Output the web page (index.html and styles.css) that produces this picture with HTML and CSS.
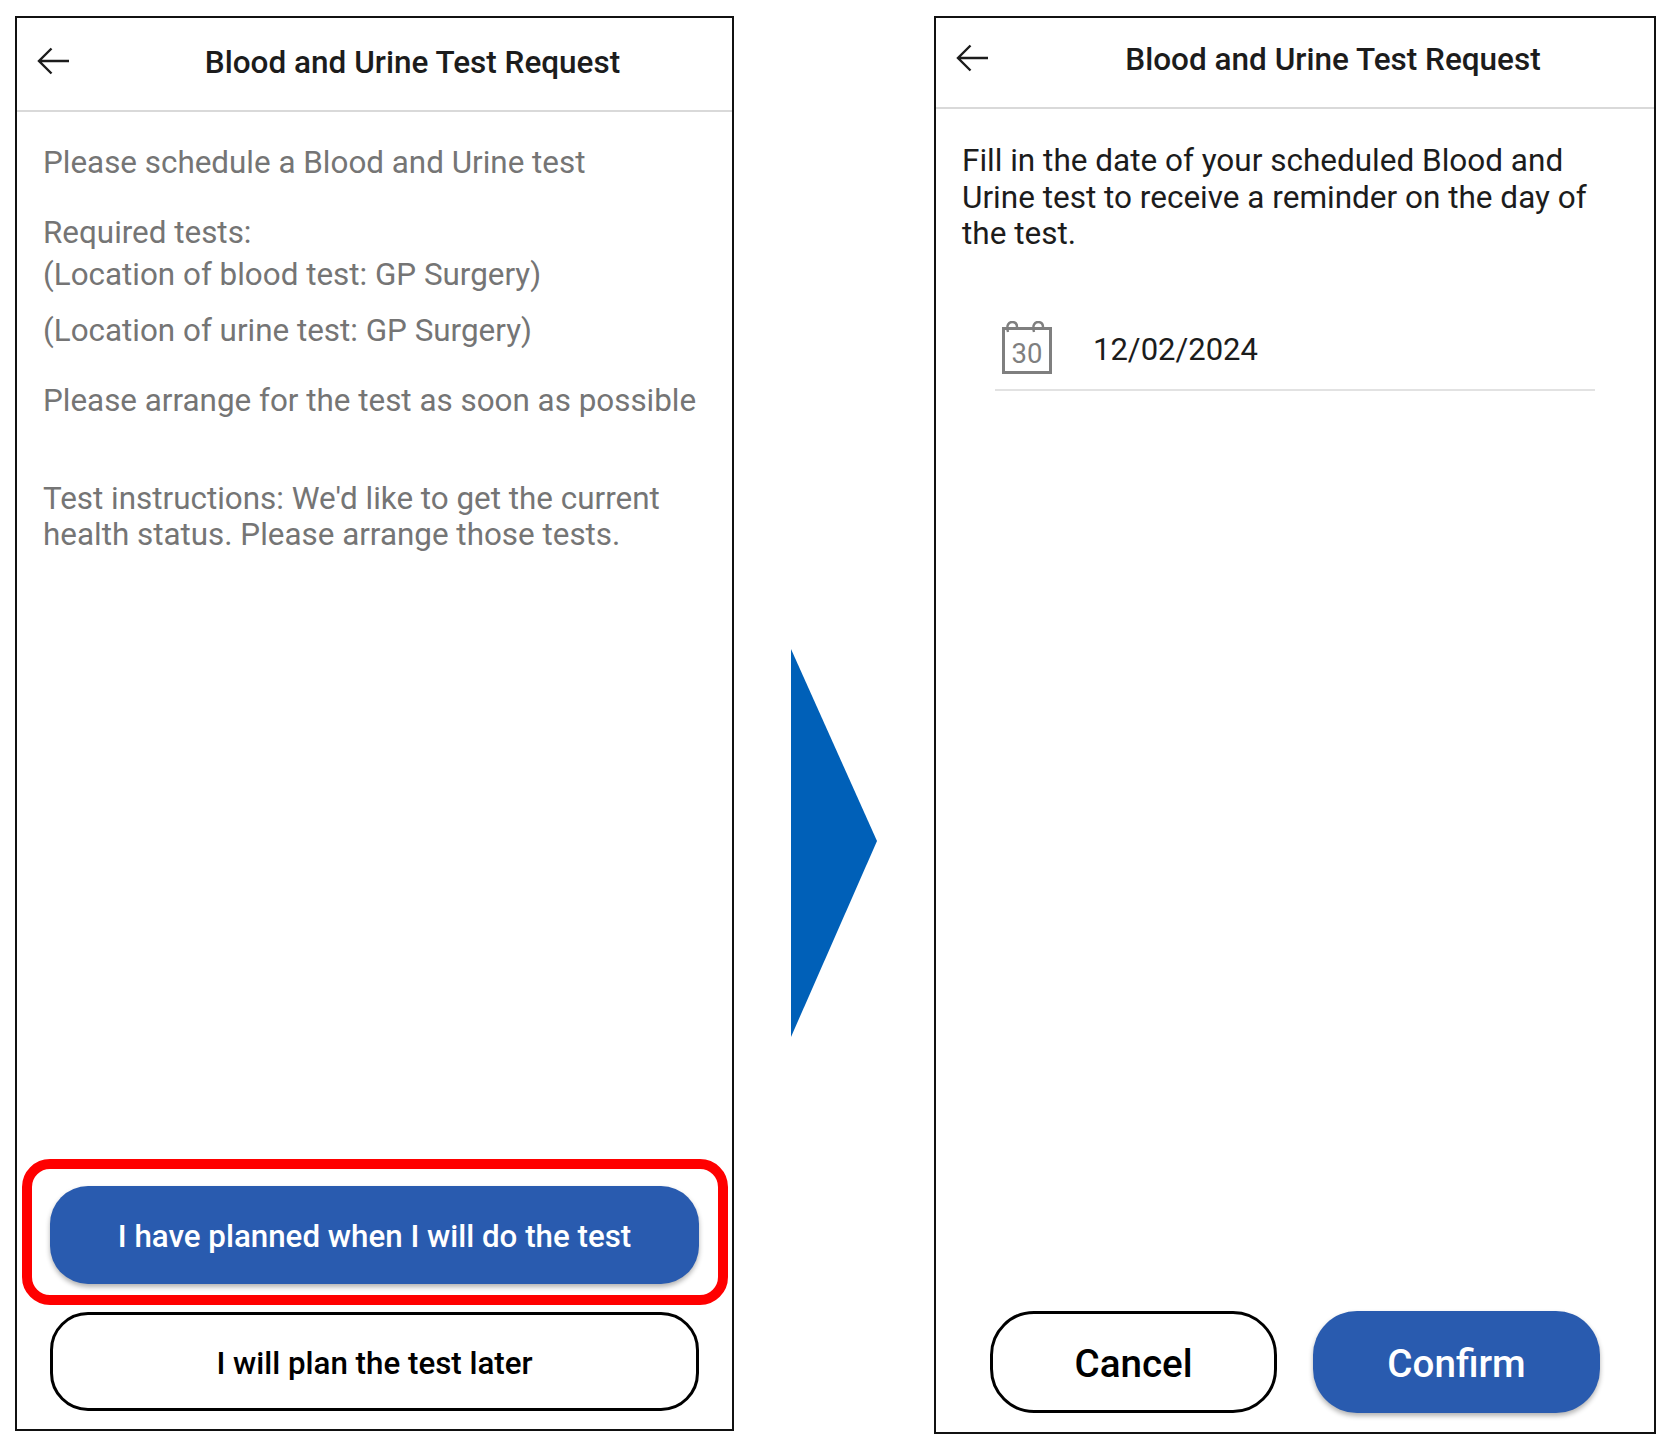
FILE: index.html
```html
<!DOCTYPE html>
<html lang="en">
<head>
    <meta charset="UTF-8">
    <meta name="viewport" content="width=device-width, initial-scale=1.0">
    <title>Blood and Urine Test Request</title>
    <link rel="stylesheet" href="styles.css">
</head>
<body>
    <div id="page">
        <div class="phone" id="phone-request">
            <div class="app-bar">
                <svg class="back-icon" viewBox="0 0 34 30" aria-hidden="true">
                    <path d="M33 15H3M15.5 2.5L3 15l12.5 12.5"/>
                </svg>
                <h1>Blood and Urine Test Request</h1>
            </div>
            <div class="request-body">
                <p class="single">Please schedule a Blood and Urine test</p>
                <p class="required">Required tests:<br>(Location of blood test: GP Surgery)</p>
                <p class="urine">(Location of urine test: GP Surgery)</p>
                <p class="arrange">Please arrange for the test as soon as possible</p>
                <p class="instructions">Test instructions: We'd like to get the current health status. Please arrange those tests.</p>
            </div>
            <div class="request-actions">
                <div class="highlight">
                    <button class="btn btn-primary btn-wide">I have planned when I will do the test</button>
                </div>
                <button class="btn btn-outline btn-wide btn-later">I will plan the test later</button>
            </div>
        </div>

        <svg class="next-arrow" viewBox="0 0 86 388" aria-hidden="true">
            <polygon points="0,0 86,192 0,388"/>
        </svg>

        <div class="phone" id="phone-date">
            <div class="app-bar">
                <svg class="back-icon" viewBox="0 0 34 30" aria-hidden="true">
                    <path d="M33 15H3M15.5 2.5L3 15l12.5 12.5"/>
                </svg>
                <h1>Blood and Urine Test Request</h1>
            </div>
            <div class="date-body">
                <p class="intro">Fill in the date of your scheduled Blood and Urine test to receive a reminder on the day of the test.</p>
                <div class="date-field">
                    <div class="calendar-icon">
                        <svg class="calendar-rings" viewBox="0 0 49 12" aria-hidden="true">
                            <path d="M6 11C4 4 7 1 10 1s5 2 5 5"/>
                            <path d="M32 11C30 4 33 1 36 1s5 2 5 5"/>
                        </svg>
                        <span class="calendar-day">30</span>
                    </div>
                    <span class="date-value">12/02/2024</span>
                </div>
            </div>
            <div class="date-actions">
                <button class="btn btn-outline btn-half">Cancel</button>
                <button class="btn btn-primary btn-half">Confirm</button>
            </div>
        </div>
    </div>
</body>
</html>
```

FILE: styles.css
```css
:root {
    --frame: #111111;
    --divider: #d9d9d9;
    --text-muted: #757575;
    --text-dark: #1c1c1c;
    --primary: #295baf;
    --arrow: #0060b8;
    --highlight: #ff0000;
}

* {
    margin: 0;
    padding: 0;
    box-sizing: border-box;
}

body {
    font-family: 'Roboto', 'Liberation Sans', sans-serif;
    background: #ffffff;
    color: var(--text-dark);
}

#page {
    width: 1674px;
    height: 1456px;
    padding: 16px 18px 0 15px;
    display: flex;
    align-items: flex-start;
}

.phone {
    border: 2px solid var(--frame);
    background: #ffffff;
    display: flex;
    flex-direction: column;
}

#phone-request {
    width: 719px;
    height: 1415px;
}

#phone-date {
    width: 722px;
    height: 1418px;
}

.app-bar {
    display: flex;
    align-items: center;
    justify-content: center;
    position: relative;
    border-bottom: 2px solid var(--divider);
    flex-shrink: 0;
    padding: 0 0 4px 76px;
}

#phone-request .app-bar {
    height: 94px;
}

#phone-date .app-bar {
    height: 91px;
    padding-bottom: 6px;
}

.app-bar h1 {
    font-size: 31.5px;
    font-weight: 500;
    color: var(--text-dark);
}

.back-icon {
    position: absolute;
    left: 19px;
    top: 28px;
    width: 34px;
    height: 30px;
    fill: none;
    stroke: #1c1c1c;
    stroke-width: 2.4;
}

#phone-date .back-icon {
    top: 25px;
}

/* left screen */
.request-body {
    flex: 1;
    padding: 33px 20px 0 26px;
    font-size: 31.4px;
    line-height: 36.5px;
    color: var(--text-muted);
}

.required {
    margin-top: 30px;
    line-height: 42px;
}

.urine {
    margin-top: 17px;
}

.arrange {
    margin-top: 33.5px;
}

.instructions {
    margin-top: 61.5px;
}

.request-actions {
    padding: 0 4px 18px 5px;
    display: flex;
    flex-direction: column;
}

.highlight {
    border: 10px solid var(--highlight);
    border-radius: 28px;
    padding: 17px 18px 11px 18px;
}

.btn {
    font-family: inherit;
    display: flex;
    align-items: center;
    justify-content: center;
    cursor: pointer;
}

.btn-primary {
    background: var(--primary);
    color: #ffffff;
    border: none;
    box-shadow: 0 3px 5px rgba(0, 0, 0, 0.3);
}

.btn-outline {
    background: #ffffff;
    color: #000000;
    border: 3px solid #000000;
}

.btn-wide {
    width: 649px;
    height: 98px;
    border-radius: 38px;
    font-size: 31.3px;
    font-weight: 500;
    padding-top: 2px;
}

.btn-later {
    height: 99px;
    margin: 7px 0 0 28px;
    padding-top: 4px;
}

/* right screen */
.date-body {
    flex: 1;
    padding: 34px 40px 0 26px;
}

.intro {
    font-size: 31.5px;
    line-height: 36.5px;
    color: var(--text-dark);
}

.date-field {
    margin: 56px 19px 0 33px;
    height: 82px;
    display: flex;
    align-items: center;
    border-bottom: 2px solid #e2e2e2;
    padding: 0 0 0 7px;
}

.calendar-icon {
    width: 50px;
    height: 47px;
    border: 3px solid #7f7f7f;
    position: relative;
    display: flex;
    align-items: center;
    justify-content: center;
    margin-top: 4px;
}

.calendar-rings {
    position: absolute;
    top: -9px;
    left: -3px;
    width: 49px;
    height: 12px;
    fill: none;
    stroke: #7f7f7f;
    stroke-width: 2.4;
}

.calendar-day {
    font-size: 27.5px;
    color: #7f7f7f;
    padding-top: 5px;
}

.date-value {
    font-size: 31px;
    color: var(--text-dark);
    margin-left: 41px;
    padding-top: 2px;
}

.date-actions {
    padding: 0 53px 19px 54px;
    display: flex;
    gap: 36px;
}

.btn-half {
    width: 287px;
    height: 102px;
    border-radius: 44px;
    font-size: 38.6px;
    font-weight: 500;
    padding-top: 3px;
}

.next-arrow {
    width: 86px;
    height: 388px;
    margin: 633px 57px 0 57px;
    fill: var(--arrow);
    flex-shrink: 0;
}
```
